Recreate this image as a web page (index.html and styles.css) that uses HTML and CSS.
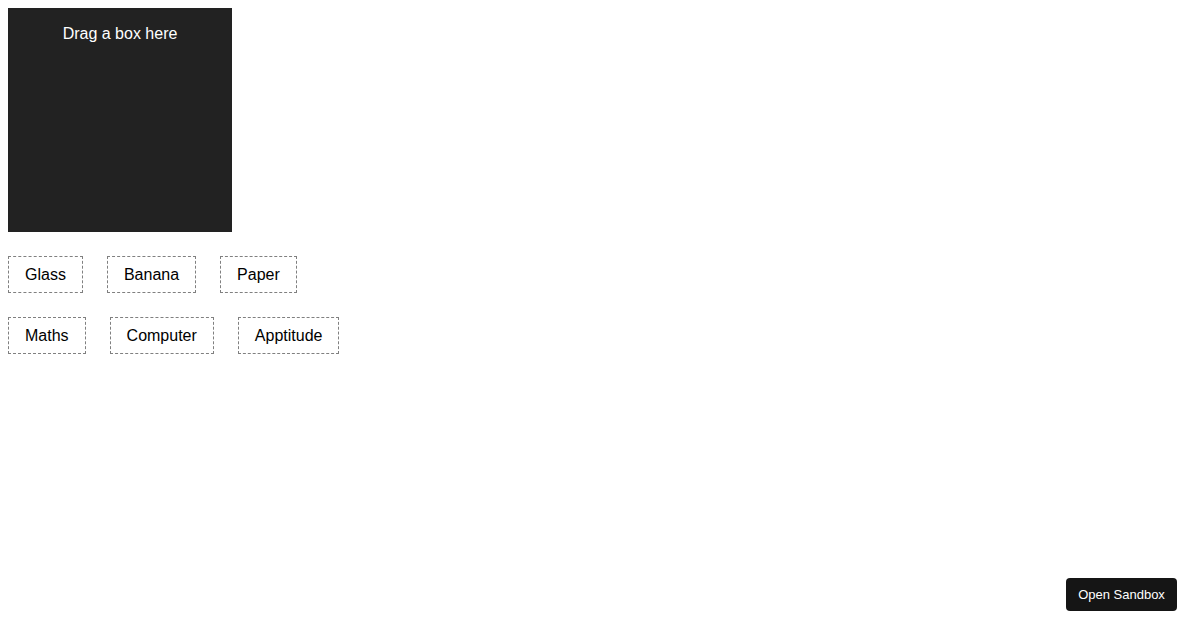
FILE: index.html
```html
<!DOCTYPE html>
<html>
<head>
<meta charset="utf-8">
<link rel="stylesheet" href="styles.css">
</head>
<body>
<div class="app">
  <div class="dustbin">Drag a box here</div>
  <div class="row">
    <div class="box">Glass</div>
    <div class="box">Banana</div>
    <div class="box">Paper</div>
  </div>
  <div class="row">
    <div class="box">Maths</div>
    <div class="box">Computer</div>
    <div class="box">Apptitude</div>
  </div>
</div>
<a class="sandbox">Open Sandbox</a>
</body>
</html>
```
FILE: styles.css
```css
html, body {
  margin: 0;
  padding: 0;
  background: #fff;
}
body {
  font-family: "Liberation Sans", Arial, sans-serif;
  font-size: 16px;
  padding: 8px;
  height: 630px;
  box-sizing: border-box;
}
.dustbin {
  width: 224px;
  height: 224px;
  box-sizing: border-box;
  background: #222222;
  color: #ffffff;
  padding: 17px 16px 16px;
  text-align: center;
  line-height: 18px;
  margin-bottom: 24px;
}
.row {
  display: flex;
  gap: 24px;
  margin-bottom: 24px;
}
.box {
  border: 1px dashed gray;
  padding: 8px 16px;
  line-height: 19px;
  color: #000;
}
.sandbox {
  position: fixed;
  right: 23px;
  bottom: 19px;
  width: 111px;
  height: 33px;
  box-sizing: border-box;
  background: #151515;
  color: #fff;
  font-size: 13px;
  border-radius: 4px;
  display: flex;
  align-items: center;
  justify-content: center;
}
```
